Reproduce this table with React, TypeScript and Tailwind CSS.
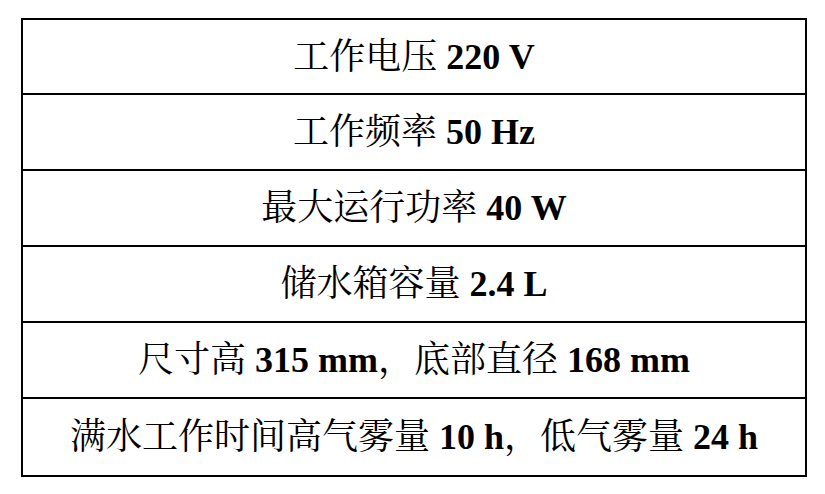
const rows: [string, string][][] = [
  [['工作电压 ', 'c'], ['220 V', 'n']],
  [['工作频率 ', 'c'], ['50 Hz', 'n']],
  [['最大运行功率 ', 'c'], ['40 W', 'n']],
  [['储水箱容量 ', 'c'], ['2.4 L', 'n']],
  [['尺寸高 ', 'c'], ['315 mm', 'n'], ['，', 'p'], ['底部直径 ', 'c'], ['168 mm', 'n']],
  [['满水工作时间高气雾量 ', 'c'], ['10 h', 'n'], ['，', 'p'], ['低气雾量 ', 'c'], ['24 h', 'n']],
];

export default function App() {
  return (
    <div className="w-[825px] h-[494px] bg-white pt-[18px] pl-[21px]">
      <div className="w-[786px] border-2 border-black">
        {rows.map((parts, i) => (
          <div
            key={i}
            className={`flex items-center justify-center whitespace-pre text-[36px] text-black ${
              i < rows.length - 1 ? 'border-b-2 border-black' : ''
            } ${i === 0 ? 'h-[75px]' : 'h-[76px]'}`}
            style={{ fontFamily: '"Liberation Serif", "Noto Serif CJK SC", "Noto Sans CJK SC", serif' }}
          >
            {parts.map(([t, k], j) =>
              k === 'n' ? (
                <span key={j} className="font-bold">
                  {t}
                </span>
              ) : k === 'p' ? (
                <span key={j} className="inline-block w-[36px] text-left">
                  {t}
                </span>
              ) : (
                <span key={j}>{t}</span>
              )
            )}
          </div>
        ))}
      </div>
    </div>
  );
}
